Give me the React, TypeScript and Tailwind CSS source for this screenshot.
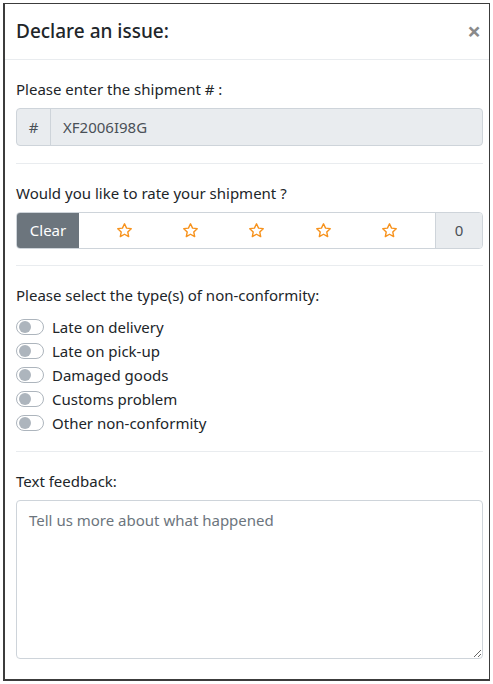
import React from "react";

const font = { fontFamily: '"Segoe UI", "Noto Sans", "Open Sans", Arial, sans-serif' };

const Star = () => (
  <svg width="17" height="17" viewBox="0 0 24 24" fill="none" stroke="#f7931e" strokeWidth="2" strokeLinejoin="round">
    <path d="M12 2.5l2.9 6.1 6.6.8-4.9 4.6 1.3 6.6L12 17.3l-5.9 3.3 1.3-6.6-4.9-4.6 6.6-.8z" />
  </svg>
);

const Switch = ({ label }: { label: string }) => (
  <div className="flex items-center h-6">
    <span className="w-[28px] h-[16px] rounded-full border border-[#adb5bd] bg-white flex items-center px-[2px] mr-[8px]">
      <span className="w-[12px] h-[12px] rounded-full bg-[#adb5bd]" />
    </span>
    <span className="text-[15px] text-[#212529]">{label}</span>
  </div>
);

const types = [
  "Late on delivery",
  "Late on pick-up",
  "Damaged goods",
  "Customs problem",
  "Other non-conformity",
];

export default function App() {
  return (
    <div className="min-h-screen bg-white p-[3px]" style={font}>
      <div className="h-[678px] border border-[#3c3c3c] border-l-2 border-b-2 bg-white flex flex-col">
        <div className="h-[56px] flex items-center justify-between pl-[11px] pr-[8px] border-b border-[#e9ecef]">
          <h5 className="text-[19px] font-medium text-[#212529]">Declare an issue:</h5>
          <span className="text-[24px] font-bold leading-none text-[#8a8a8a] -mt-[2px]">×</span>
        </div>

        <div className="pl-[11px] pr-[6px] pt-[17px]">
          <div className="text-[15px] text-[#212529] leading-6">Please enter the shipment # :</div>
          <div className="mt-[7px] h-[38px] flex border border-[#ced4da] rounded bg-[#e9ecef] text-[15px] text-[#495057]">
            <span className="w-[34px] flex items-center justify-center border-r border-[#ced4da]">#</span>
            <span className="flex items-center pl-[12px]">XF2006I98G</span>
          </div>

          <hr className="mt-[17px] border-[#e9ecef]" />

          <div className="mt-[17px] text-[15px] text-[#212529] leading-6">Would you like to rate your shipment ?</div>
          <div className="mt-[7px] h-[37px] flex border border-[#ced4da] rounded overflow-hidden text-[15px]">
            <span className="w-[62px] bg-[#6c757d] text-white flex items-center justify-center">Clear</span>
            <div className="flex-1 flex items-center justify-around px-[12px] bg-white">
              <Star />
              <Star />
              <Star />
              <Star />
              <Star />
            </div>
            <span className="w-[47px] bg-[#e9ecef] border-l border-[#ced4da] text-[#495057] flex items-center justify-center">0</span>
          </div>

          <hr className="mt-[16px] border-[#e9ecef]" />

          <div className="mt-[17px] text-[15px] text-[#212529] leading-6">Please select the type(s) of non-conformity:</div>
          <div className="mt-[8px] flex flex-col">
            {types.map((t) => (
              <Switch key={t} label={t} />
            ))}
          </div>

          <hr className="mt-[16px] border-[#e9ecef]" />

          <div className="mt-[17px] text-[15px] text-[#212529] leading-6">Text feedback:</div>
          <textarea
            className="mt-[7px] block w-full h-[159px] border border-[#ced4da] rounded px-[12px] pt-[8px] pb-[6px] text-[15px] text-[#495057] placeholder:text-[#6c757d] outline-none"
            placeholder="Tell us more about what happened"
          />
        </div>
      </div>
    </div>
  );
}
